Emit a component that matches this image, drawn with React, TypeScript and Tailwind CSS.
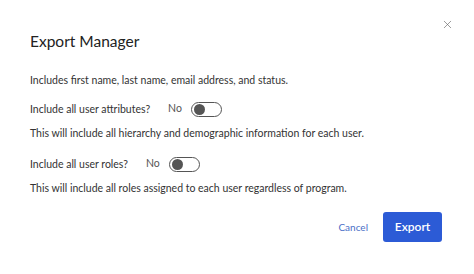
import { X } from "lucide-react";

function Toggle() {
  return (
    <div className="flex h-[15px] w-[31px] items-center rounded-full border border-[#555] px-[2px]">
      <div className="h-[11px] w-[11px] rounded-full bg-[#555]" />
    </div>
  );
}

export default function App() {
  return (
    <div
      className="relative h-[274px] w-[474px] bg-white text-[#333]"
      style={{ fontFamily: 'Lato, "Open Sans", sans-serif' }}
    >
      <button className="absolute right-[20px] top-[18px] text-[#666]">
        <X size={13} strokeWidth={1.2} />
      </button>

      <div className="px-[30px] pt-[31px]">
        <h1 className="text-[15.5px] leading-[20px] text-[#222]">Export Manager</h1>

        <p className="mt-[21px] text-[10.5px] leading-[16px]">
          Includes first name, last name, email address, and status.
        </p>

        <div className="mt-[13px] flex items-center">
          <span className="text-[10.5px] leading-[16px]">Include all user attributes?</span>
          <span className="ml-[18px] text-[10.5px] text-[#555]">No</span>
          <div className="ml-[9px]">
            <Toggle />
          </div>
        </div>
        <p className="mt-[8px] text-[10.5px] leading-[16px]">
          This will include all hierarchy and demographic information for each user.
        </p>

        <div className="mt-[15px] flex items-center">
          <span className="text-[10.5px] leading-[16px]">Include all user roles?</span>
          <span className="ml-[18px] text-[10.5px] text-[#555]">No</span>
          <div className="ml-[9px]">
            <Toggle />
          </div>
        </div>
        <p className="mt-[8px] text-[10.5px] leading-[16px]">
          This will include all roles assigned to each user regardless of program.
        </p>

        <div className="mt-[16px] flex items-center justify-end pr-[2px]">
          <button className="text-[10px] text-[#4a6fc7]">Cancel</button>
          <button className="ml-[15px] h-[30px] w-[59px] rounded-[3px] bg-[#2c5bd6] text-[12px] font-semibold text-white">
            Export
          </button>
        </div>
      </div>
    </div>
  );
}
